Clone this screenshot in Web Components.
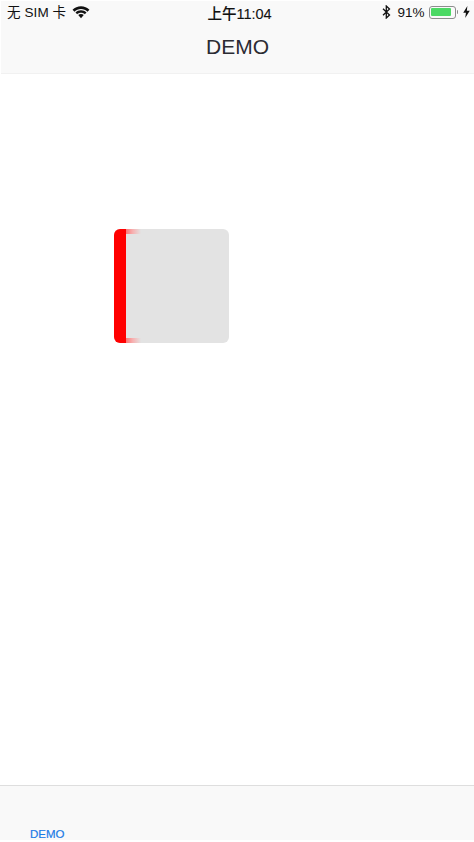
<!DOCTYPE html>
<html lang="zh">
<head>
<meta charset="utf-8">
<title>DEMO</title>
<style>
html, body { margin: 0; padding: 0; height: 100%; background: #fff; }
body { font-family: "Liberation Sans", "Noto Sans CJK SC", sans-serif; overflow: hidden; }
</style>
</head>
<body>
<demo-app>
  <status-bar></status-bar>
  <nav-bar>DEMO</nav-bar>
  <demo-content><swipe-square></swipe-square></demo-content>
  <tab-bar>DEMO</tab-bar>
</demo-app>

<script>
class DemoApp extends HTMLElement {
    constructor() {
        super();
        this.attachShadow({ mode: "open" });
        this.shadowRoot.innerHTML = `
        <style>
        :host {
          display: flex;
          flex-direction: column;
          width: 474px;
          height: 842px;
          box-sizing: border-box;
          padding: 1px 0 2px 1px;
        }
        </style>
        <slot></slot>
        `;
    }
}

class StatusBar extends HTMLElement {
    constructor() {
        super();
        this.attachShadow({ mode: "open" });
        this.shadowRoot.innerHTML = `
        <style>
        :host {
          display: grid;
          grid-template-columns: 1fr auto 1fr;
          align-items: center;
          height: 21px;
          padding: 0 4px 0 6px;
          background: #f9f9f9;
          color: #111;
          font: 13.5px "Liberation Sans", "Noto Sans CJK SC", sans-serif;
          flex: none;
        }
        .left, .right { display: flex; align-items: center; }
        .right { justify-content: flex-end; }
        .carrier { letter-spacing: 0.1px; margin-bottom: 2px; }
        .wifi { margin-left: 6px; }
        .time { font-weight: 500; font-size: 14.5px; margin-left: 2px; -webkit-text-stroke: 0.1px #111; }
        .bt { margin-right: 6px; }
        .battery {
          position: relative;
          box-sizing: border-box;
          width: 27px;
          height: 13px;
          margin-left: 4px;
          padding: 1.5px;
          border: 1px solid #8d8d8d;
          border-radius: 3px;
        }
        .battery i {
          display: block;
          width: 91%;
          height: 100%;
          background: #4cd964;
          border-radius: 1px;
        }
        .cap {
          width: 1.5px;
          height: 4px;
          margin: 0 5px 0 1px;
          background: #8d8d8d;
          border-radius: 0 1px 1px 0;
        }
        </style>
        <div class="left">
          <span class="carrier">无 SIM 卡</span>
          <svg class="wifi" width="18" height="13" viewBox="0 0 17 12">
            <path d="M8.500 2.800c2.400 0 4.500.9 6.100 2.400l1.900-1.900C14.400 1.200 11.600 0 8.500 0S2.600 1.200.5 3.300l1.900 1.900c1.600-1.500 3.700-2.400 6.100-2.400z" fill="#111"/>
            <path d="M8.500 6.200c1.400 0 2.700.5 3.600 1.400l1.600-1.700c-1.400-1.300-3.200-2.100-5.200-2.100s-3.800.8-5.200 2.100l1.600 1.700c.9-.9 2.200-1.400 3.600-1.400z" fill="#111"/>
            <path d="M8.500 7.300c-1 0-1.900.4-2.600 1l2.600 3.200 2.600-3.200c-.7-.6-1.600-1-2.600-1z" fill="#111"/>
          </svg>
        </div>
        <span class="time">上午11:04</span>
        <div class="right">
          <svg class="bt" width="9" height="14" viewBox="0 0 9 14" fill="none" stroke="#111" stroke-width="1.300">
            <path d="M1 3.800l6.500 6.200L4.300 13V1l3.200 3L1 10.200"/>
          </svg>
          <span>91%</span>
          <div class="battery"><i></i></div>
          <div class="cap"></div>
          <svg width="7" height="12" viewBox="0 0 6 11"><path d="M3.800 0L0 6.300h2.500L1.800 11 6 4.400H3.300z" fill="#111"/></svg>
        </div>
        `;
    }
}

class NavBar extends HTMLElement {
    constructor() {
        super();
        this.attachShadow({ mode: "open" });
        this.shadowRoot.innerHTML = `
        <style>
        :host {
          display: flex;
          align-items: center;
          justify-content: center;
          flex: none;
          height: 52px;
          padding-bottom: 1px;
          box-sizing: border-box;
          background: #f9f9f9;
          border-bottom: 1px solid #f1f1f1;
          color: #2b2b33;
          font: 21px "Liberation Sans", sans-serif;
        }
        </style>
        <slot></slot>
        `;
    }
}

class DemoContent extends HTMLElement {
    constructor() {
        super();
        this.attachShadow({ mode: "open" });
        this.shadowRoot.innerHTML = `
        <style>
        :host {
          display: block;
          flex: 1;
          padding: 155px 0 0 113px;
          background: #fff;
        }
        </style>
        <slot></slot>
        `;
    }
}

class SwipeSquare extends HTMLElement {
    constructor() {
        super();
        this.attachShadow({ mode: "open" });
        this.shadowRoot.innerHTML = `
        <style>
        :host {
          display: flex;
          width: 115px;
          height: 114px;
          background: #e3e3e3;
          border-radius: 6px;
          overflow: hidden;
        }
        .bar {
          flex: none;
          width: 12px;
          background: #ff0000;
        }
        .edge {
          display: flex;
          flex-direction: column;
          justify-content: space-between;
          width: 15px;
        }
        .edge i {
          display: block;
          height: 5px;
          background: linear-gradient(to right, #fb7a7a 0%, #f7b0b0 45%, #e3e3e3 100%);
        }
        </style>
        <div class="bar"></div>
        <div class="edge"><i></i><i></i></div>
        `;
    }
}

class TabBar extends HTMLElement {
    constructor() {
        super();
        this.attachShadow({ mode: "open" });
        this.shadowRoot.innerHTML = `
        <style>
        :host {
          display: flex;
          align-items: flex-end;
          flex: none;
          height: 55px;
          margin-left: -1px;
          padding-left: 30px;
          box-sizing: border-box;
          background: #f9f9f9;
          border-top: 1px solid #dedede;
          color: #1a7ae6;
          font: 11.5px/12px "Liberation Sans", sans-serif;
          -webkit-text-stroke: 0.2px #1a7ae6;
        }
        </style>
        <slot></slot>
        `;
    }
}

customElements.define("demo-app", DemoApp);
customElements.define("status-bar", StatusBar);
customElements.define("nav-bar", NavBar);
customElements.define("demo-content", DemoContent);
customElements.define("swipe-square", SwipeSquare);
customElements.define("tab-bar", TabBar);
</script>
</body>
</html>
